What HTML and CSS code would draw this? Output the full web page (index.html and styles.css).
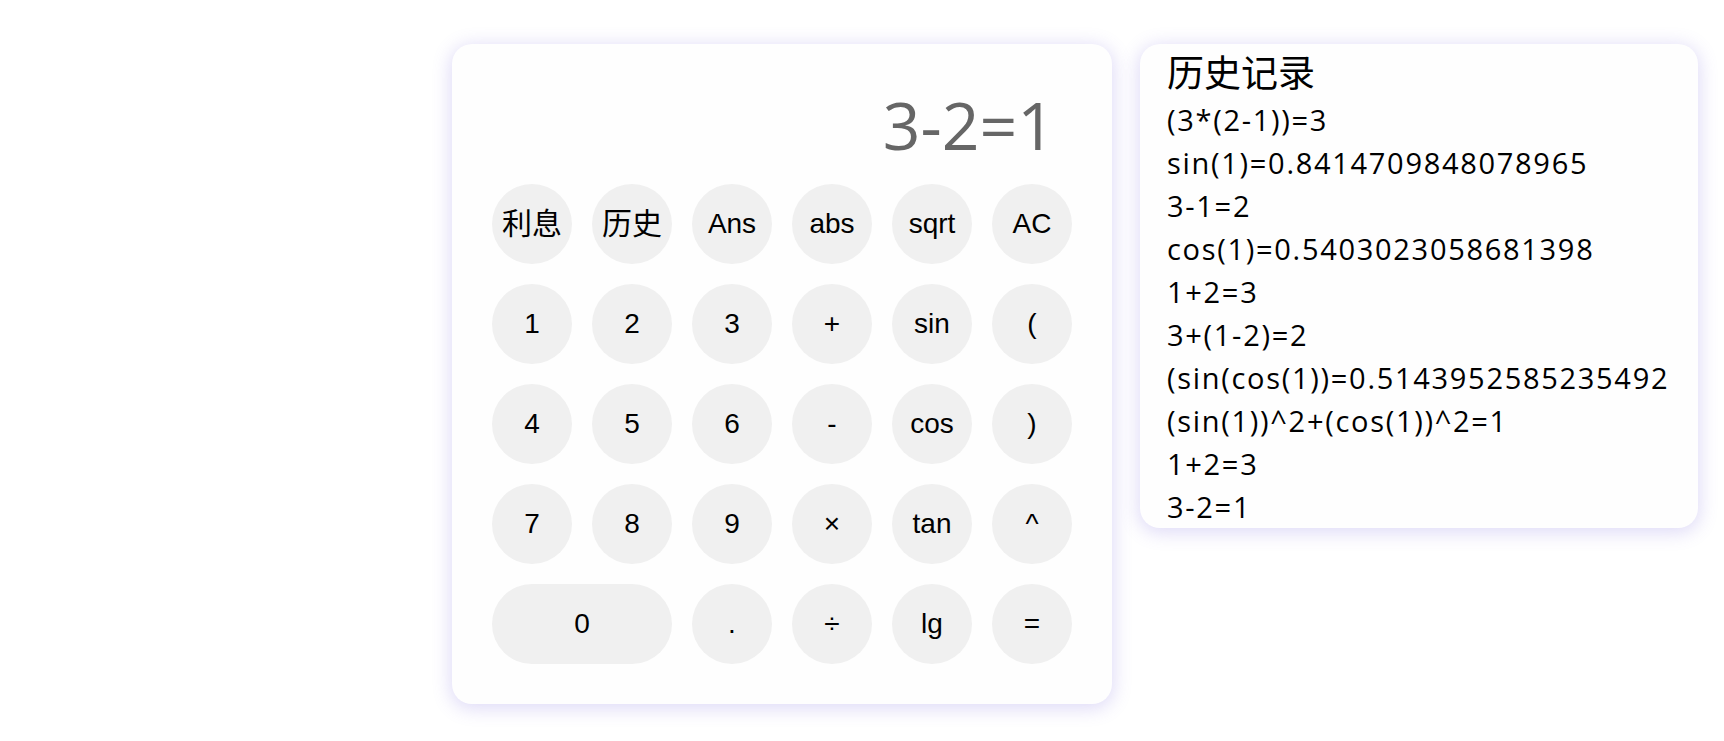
FILE: index.html
```html
<!DOCTYPE html>
<html lang="zh-CN">
<head>
<meta charset="utf-8">
<title>计算器</title>
<link rel="stylesheet" href="styles.css">
</head>
<body>
<main class="page">
  <section class="calc">
    <div class="display">3-2=1</div>
    <div class="keys">
      <button class="key cn">利息</button>
      <button class="key cn">历史</button>
      <button class="key">Ans</button>
      <button class="key">abs</button>
      <button class="key">sqrt</button>
      <button class="key">AC</button>
      <button class="key">1</button>
      <button class="key">2</button>
      <button class="key">3</button>
      <button class="key">+</button>
      <button class="key">sin</button>
      <button class="key">(</button>
      <button class="key">4</button>
      <button class="key">5</button>
      <button class="key">6</button>
      <button class="key">-</button>
      <button class="key">cos</button>
      <button class="key">)</button>
      <button class="key">7</button>
      <button class="key">8</button>
      <button class="key">9</button>
      <button class="key">×</button>
      <button class="key">tan</button>
      <button class="key">^</button>
      <button class="key key-wide">0</button>
      <button class="key">.</button>
      <button class="key">÷</button>
      <button class="key">lg</button>
      <button class="key">=</button>
    </div>
  </section>
  <aside class="history">
    <h2 class="history-title">历史记录</h2>
    <ul class="history-list">
      <li>(3*(2-1))=3</li>
      <li>sin(1)=0.8414709848078965</li>
      <li>3-1=2</li>
      <li>cos(1)=0.5403023058681398</li>
      <li>1+2=3</li>
      <li>3+(1-2)=2</li>
      <li>(sin(cos(1))=0.5143952585235492</li>
      <li>(sin(1))^2+(cos(1))^2=1</li>
      <li>1+2=3</li>
      <li>3-2=1</li>
    </ul>
  </aside>
</main>
</body>
</html>
```
FILE: styles.css
```css
html, body {
  margin: 0;
  padding: 0;
  background: #ffffff;
}

.page {
  display: flex;
  align-items: flex-start;
  gap: 28px;
  padding: 44px 0 40px 452px;
}

.calc {
  width: 660px;
  box-sizing: border-box;
  padding: 40px;
  background: #fefefe;
  border-radius: 20px;
  box-shadow: 0 3px 18px 2px rgba(110, 90, 220, 0.22);
}

.display {
  height: 80px;
  line-height: 80px;
  margin-bottom: 20px;
  padding-right: 17px;
  text-align: right;
  font-family: "Open Sans", "Noto Sans CJK SC", sans-serif;
  font-size: 66px;
  color: #666666;
  white-space: nowrap;
}

.keys {
  display: grid;
  grid-template-columns: repeat(6, 80px);
  grid-auto-rows: 80px;
  gap: 20px;
}

.key {
  border: none;
  margin: 0;
  padding: 0;
  border-radius: 40px;
  background: #f0f0f0;
  color: #000000;
  font-family: "Liberation Sans", "Noto Sans CJK SC", sans-serif;
  font-size: 28px;
  line-height: 1;
}

.key.cn {
  font-size: 30px;
}

.key-wide {
  grid-column: span 2;
}

.history {
  width: 558px;
  box-sizing: border-box;
  padding: 0 20px 0 27px;
  background: #fefefe;
  border-radius: 20px;
  box-shadow: 0 3px 18px 2px rgba(110, 90, 220, 0.22);
  font-family: "Open Sans", "Noto Sans CJK SC", sans-serif;
  color: #000000;
}

.history-title {
  margin: 0;
  font-family: "Noto Sans CJK SC", sans-serif;
  font-size: 37px;
  font-weight: 400;
  line-height: 54px;
}

.history-list {
  list-style: none;
  margin: 0;
  padding: 0;
  font-size: 29px;
  line-height: 43px;
  letter-spacing: 1.7px;
  white-space: nowrap;
}
```
